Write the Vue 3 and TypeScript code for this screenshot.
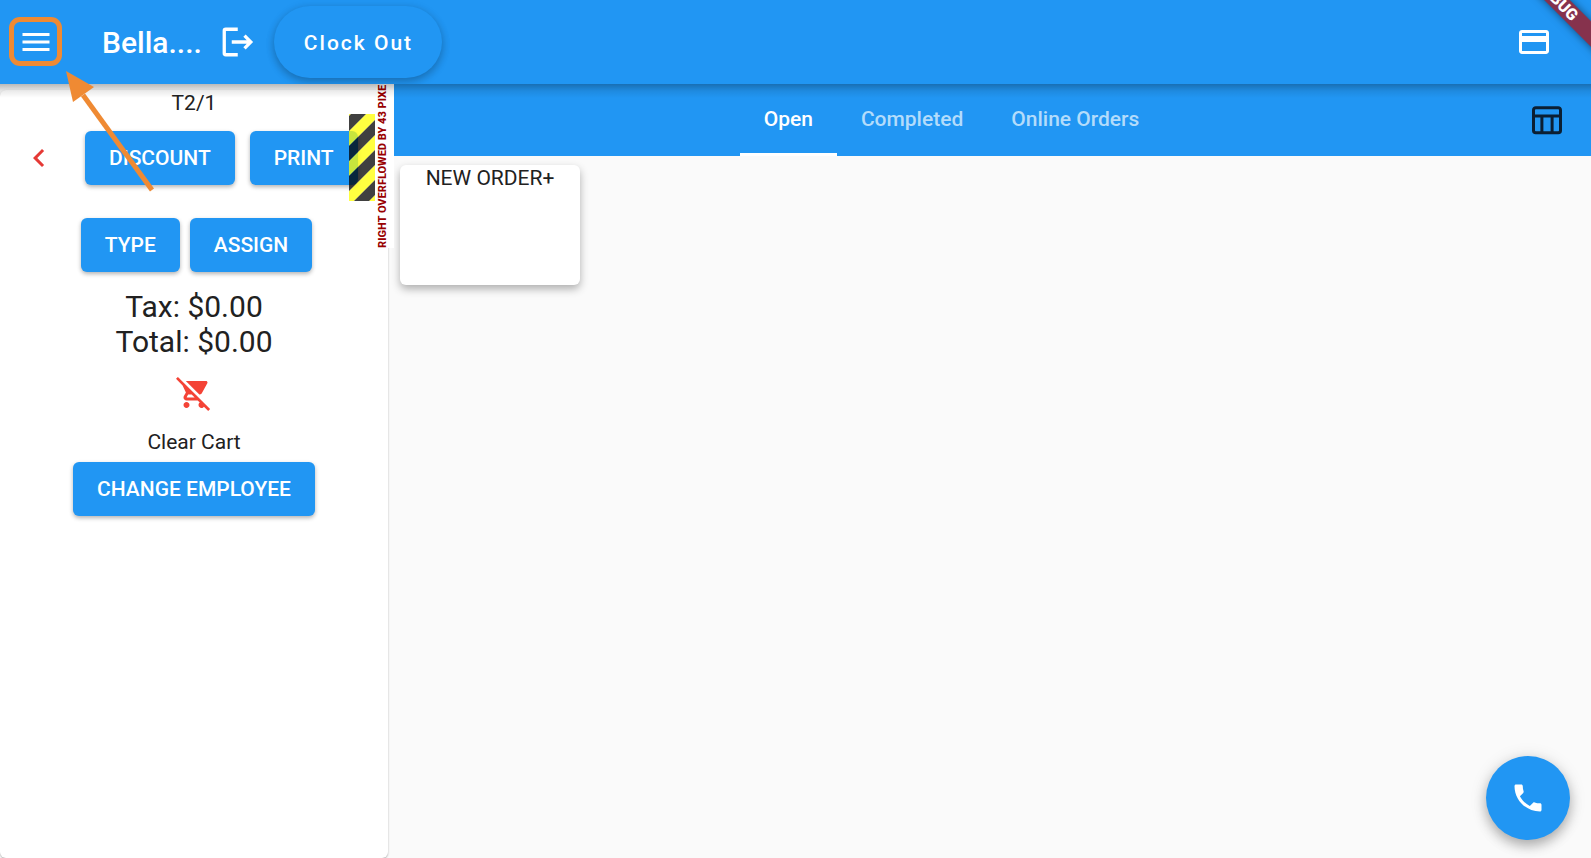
<script setup lang="ts">
import { ref } from 'vue'

const tabs: string[] = ['Open', 'Completed', 'Online Orders']
const active = ref(0)
</script>

<template>
  <div class="app">
    <header class="bar">
      <button class="icon-btn menu" aria-label="Menu">
        <svg viewBox="0 0 24 24"><path d="M3 18h18v-2H3v2zm0-5h18v-2H3v2zm0-7v2h18V6H3z" /></svg>
      </button>
      <h1 class="title">Bella....</h1>
      <button class="icon-btn exit" aria-label="Log out">
        <svg viewBox="0 0 24 24"><path d="M12.500 3.500H4.500Q3.500 3.500 3.500 4.500V19.500Q3.500 20.500 4.500 20.500H12.500M8.500 12H21M17 7.800l4.200 4.200-4.200 4.200" fill="none" stroke="currentColor" stroke-width="2.200" /></svg>
      </button>
      <button class="clock">Clock Out</button>
      <button class="icon-btn card-btn" aria-label="Payments">
        <svg viewBox="0 0 24 24"><path d="M20 4H4c-1.110 0-1.990.890-1.990 2L2 18c0 1.110.890 2 2 2h16c1.110 0 2-.890 2-2V6c0-1.110-.890-2-2-2zm0 14H4v-6h16v6zm0-10H4V6h16v2z" /></svg>
      </button>
      <div class="banner"><span>DEBUG</span></div>
    </header>

    <div class="body">
      <aside class="panel">
        <section class="cart">
          <p class="table-name">T2/1</p>
          <div class="row first">
            <button class="icon-btn back" aria-label="Back">
              <svg viewBox="0 0 24 24"><path d="M15.410 7.410 14 6l-6 6 6 6 1.410-1.410L10.830 12z" /></svg>
            </button>
            <button class="btn">DISCOUNT</button>
            <button class="btn print">PRINT</button>
          </div>
          <div class="row second">
            <button class="btn">TYPE</button>
            <button class="btn">ASSIGN</button>
          </div>
          <p class="sum">Tax: $0.00</p>
          <p class="sum">Total: $0.00</p>
          <button class="clear">
            <svg viewBox="0 0 24 24"><path d="M22.730 22.730 2.770 2.770 2 2l-.730-.730L0 2.540l4.390 4.390 2.210 4.660-1.350 2.450c-.160.280-.250.610-.250.960 0 1.100.900 2 2 2h7.460l1.380 1.380c-.500.360-.830.950-.830 1.620 0 1.100.890 2 1.990 2 .670 0 1.260-.330 1.620-.840L21.460 24l1.270-1.270zM7.420 15c-.140 0-.250-.110-.250-.250l.030-.120.900-1.630h2.360l2 2H7.420zm8.130-2c.750 0 1.410-.410 1.750-1.030l3.580-6.490c.080-.140.120-.310.120-.480 0-.550-.450-1-1-1H6.540l9.010 9zM7 18c-1.100 0-1.990.900-1.990 2S5.900 22 7 22s2-.900 2-2-.900-2-2-2z" /></svg>
            <span>Clear Cart</span>
          </button>
          <button class="btn">CHANGE EMPLOYEE</button>
        </section>
        <svg class="stripes" viewBox="0 0 26 87">
          <g fill="#ffff00" fill-opacity=".75">
            <path d="M0 0h2L0 2zM0 17 17 0h9v6L0 32zM0 47 26 21v15L0 62zM0 77 26 51v15L5 87H0zM20 87l6-6v6z" />
          </g>
          <g fill="#000000" fill-opacity=".75">
            <path d="M0 2 2 0h15L0 17zM0 32 26 6v15L0 47zM0 62 26 36v15L0 77zM5 87 26 66v15l-6 6z" />
          </g>
        </svg>
        <div class="overflow"><span>RIGHT OVERFLOWED BY 43 PIXELS</span></div>
      </aside>

      <main class="content">
        <nav class="tabs">
          <button v-for="(tab, i) in tabs" :key="tab" class="tab" :class="{ active: i === active }" @click="active = i">{{ tab }}</button>
          <button class="icon-btn grid-btn" aria-label="Table layout">
            <svg viewBox="0 0 24 24"><path d="M4.500 3.800h15a1.500 1.500 0 0 1 1.500 1.500v13.700a1.500 1.500 0 0 1-1.500 1.500h-15a1.500 1.500 0 0 1-1.500-1.500v-13.700a1.500 1.500 0 0 1 1.500-1.500zM3 9.300h18M8.600 9.300v11.200M15.400 9.300v11.200" fill="none" stroke="currentColor" stroke-width="2" /></svg>
          </button>
        </nav>
        <button class="order">NEW ORDER+</button>
      </main>
    </div>

    <button class="call" aria-label="Call">
      <svg viewBox="0 0 24 24"><path d="M6.620 10.790c1.440 2.830 3.760 5.140 6.590 6.590l2.200-2.200c.270-.270.670-.360 1.020-.240 1.120.370 2.330.570 3.570.570.550 0 1 .450 1 1V20c0 .550-.450 1-1 1-9.390 0-17-7.610-17-17 0-.550.450-1 1-1h3.500c.550 0 1 .450 1 1 0 1.250.200 2.450.570 3.570.110.350.030.740-.250 1.020l-2.200 2.200z" /></svg>
    </button>

    <div class="highlight"></div>
    <svg class="arrow" viewBox="0 0 92 122">
      <path d="M86 119 17 24" stroke="#ef8a33" stroke-width="5" fill="none" />
      <path d="M0 0 28 16 7 31z" fill="#ef8a33" />
    </svg>
  </div>
</template>

<style>
body {
  margin: 0;
}
</style>

<style scoped>
.app {
  position: relative;
  display: flex;
  flex-direction: column;
  min-height: 100vh;
  overflow: hidden;
  background: #fafafa;
  color: #212121;
  font-family: Roboto, sans-serif;
  font-size: 21px;
  line-height: 24px;
}
button {
  margin: 0;
  padding: 0;
  border: 0;
  background: none;
  color: inherit;
  font: inherit;
  cursor: pointer;
}
p,
h1 {
  margin: 0;
}
svg {
  display: block;
  fill: currentColor;
}
.icon-btn svg {
  width: 36px;
  height: 36px;
}
.bar {
  position: relative;
  z-index: 2;
  display: flex;
  align-items: center;
  height: 84px;
  overflow: hidden;
  box-sizing: border-box;
  padding: 0 39px 0 18px;
  background: #2196f3;
  color: #fff;
}
.title {
  margin-left: 48px;
  padding-top: 2px;
  font-size: 30px;
  font-weight: 500;
  line-height: 36px;
}
.exit {
  margin-left: 17px;
}
.clock {
  height: 72px;
  margin-left: 19px;
  padding: 2px 29px 0 30px;
  border-radius: 36px;
  font-weight: 500;
  letter-spacing: 2px;
  background: #2196f3;
  box-shadow: 0 4px 8px rgba(0, 0, 0, 0.2), 0 1px 10px rgba(0, 0, 0, 0.1);
}
.card-btn {
  margin-left: auto;
}
.banner {
  position: absolute;
  top: -9px;
  right: -46px;
  width: 160px;
  height: 18px;
  background: rgba(160, 25, 35, 0.8);
  box-shadow: 0 0 9px rgba(0, 0, 0, 0.5);
  font-size: 16px;
  font-weight: 900;
  line-height: 18px;
  text-align: center;
  transform: rotate(45deg);
}
.body {
  flex: 1;
  display: flex;
}
.body::before {
  content: '';
  position: absolute;
  z-index: 2;
  top: 84px;
  left: 0;
  right: 0;
  height: 14px;
  background: linear-gradient(rgba(0, 0, 0, 0.26), rgba(0, 0, 0, 0.08) 50%, rgba(0, 0, 0, 0));
  pointer-events: none;
}
.panel {
  position: relative;
  flex: none;
  display: flex;
  width: 394px;
  box-sizing: border-box;
  padding: 6px 6px 0 0;
}
.cart {
  flex: 1;
  display: flex;
  flex-direction: column;
  align-items: center;
  border-radius: 6px;
  background: #fff;
  box-shadow: 0 1px 2px rgba(0, 0, 0, 0.3);
}
.btn {
  height: 54px;
  padding: 0 24px;
  border-radius: 6px;
  background: #2196f3;
  box-shadow: 0 2px 4px rgba(0, 0, 0, 0.3);
  color: #fff;
  font-weight: 500;
  white-space: nowrap;
}
.table-name {
  margin-top: 1px;
}
.row {
  display: flex;
  align-items: center;
}
.first {
  align-self: stretch;
  height: 86px;
  padding-left: 21px;
  margin-bottom: 4px;
}
.back {
  color: #e53935;
  margin-right: 28px;
}
.print {
  margin-left: 15px;
}
.second {
  gap: 10px;
  height: 72px;
  margin: 4px 0 8px 5px;
}
.sum {
  font-size: 30px;
  line-height: 35px;
}
.clear {
  display: flex;
  flex-direction: column;
  align-items: center;
  gap: 19px;
  margin: 16px 0 8px;
}
.clear svg {
  width: 36px;
  height: 36px;
  color: #f44336;
}
.stripes {
  position: absolute;
  top: 30px;
  left: 349px;
  width: 26px;
  height: 87px;
}
.overflow {
  position: absolute;
  top: 0;
  left: 376px;
  width: 18px;
  height: 164px;
  overflow: hidden;
  background: #fff;
}
.overflow span {
  position: absolute;
  bottom: 0;
  left: 0;
  color: #900;
  font-size: 11px;
  font-weight: 800;
  line-height: 14px;
  white-space: nowrap;
  writing-mode: vertical-rl;
  transform: rotate(180deg);
}
.content {
  flex: 1;
}
.tabs {
  position: relative;
  display: flex;
  justify-content: center;
  height: 72px;
  padding-right: 82px;
  background: #2196f3;
  color: #fff;
}
.tab {
  padding: 0 24px;
  border-bottom: 3px solid transparent;
  color: #b3dcfb;
  font-weight: 500;
}
.tab.active {
  border-color: #fff;
  color: #fff;
}
.grid-btn {
  position: absolute;
  top: 18px;
  right: 26px;
  color: #0b1f33;
}
.order {
  display: flex;
  justify-content: center;
  width: 180px;
  height: 120px;
  margin: 9px 6px;
  padding-top: 1px;
  border-radius: 6px;
  background: #fff;
  box-shadow: 0 4px 9px rgba(0, 0, 0, 0.3);
}
.call {
  position: absolute;
  right: 21px;
  bottom: 18px;
  display: grid;
  place-items: center;
  width: 84px;
  height: 84px;
  border-radius: 50%;
  background: #2196f3;
  box-shadow: 0 6px 12px rgba(0, 0, 0, 0.25), 0 2px 18px rgba(0, 0, 0, 0.12);
  color: #fff;
}
.call svg {
  width: 36px;
  height: 36px;
}
.highlight {
  position: absolute;
  z-index: 3;
  top: 17px;
  left: 9px;
  width: 43px;
  height: 39px;
  border: 5px solid #ef8a33;
  border-radius: 11px;
  pointer-events: none;
}
.arrow {
  position: absolute;
  z-index: 3;
  top: 71px;
  left: 66px;
  width: 92px;
  height: 122px;
  pointer-events: none;
}
</style>
